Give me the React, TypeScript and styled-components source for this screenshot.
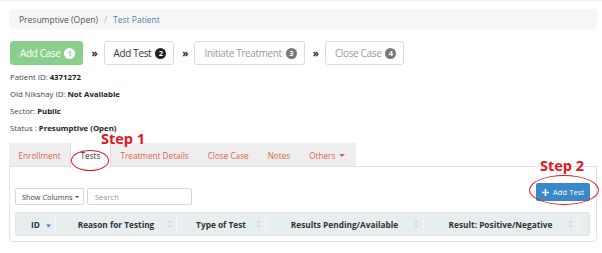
import React from 'react';
import styled, { createGlobalStyle } from 'styled-components';

const GlobalStyle = createGlobalStyle`
  html, body { margin: 0; padding: 0; background: #fff; }
  body {
    font-family: "Open Sans", "Liberation Sans", Arial, sans-serif;
    color: #333;
  }
  * { box-sizing: border-box; }
`;

const steps = [
  { label: 'Add Case', n: 1, kind: 'done' },
  { label: 'Add Test', n: 2, kind: 'current' },
  { label: 'Initiate Treatment', n: 3, kind: 'todo' },
  { label: 'Close Case', n: 4, kind: 'todo' },
] as const;

type StepKind = 'done' | 'current' | 'todo';

const tabs = ['Enrollment', 'Tests', 'Treatment Details', 'Close Case', 'Notes', 'Others'];

const columns = [
  { label: 'ID', width: 40, active: true },
  { label: 'Reason for Testing', width: 121 },
  { label: 'Type of Test', width: 89 },
  { label: 'Results Pending/Available', width: 158 },
  { label: 'Result: Positive/Negative', width: 154 },
  { label: '', width: 14, noIcon: true },
];

const info = [
  ['Patient ID:', '4371272'],
  ['Old Nikshay ID:', 'Not Available'],
  ['Sector:', 'Public'],
  ['Status :', 'Presumptive (Open)'],
];

const Page = styled.div`
  width: 602px;
  height: 253px;
  border-top: 1px solid #f0f0f0;
  padding: 8px 5px 0 9px;
  overflow: hidden;
`;

const Breadcrumb = styled.div`
  height: 20px;
  background: #f6f6f6;
  border-radius: 3px;
  display: flex;
  align-items: center;
  padding-left: 10px;
  font-size: 8.5px;
  color: #555;
`;

const Sep = styled.span`
  color: #bbb;
  margin: 0 6px;
`;

const Crumb = styled.span`
  color: #4a80b5;
`;

const StepRow = styled.div`
  display: flex;
  align-items: center;
  margin-top: 12px;
  margin-left: 1px;
`;

const StepButton = styled.div<{ $kind: StepKind }>`
  height: 24px;
  display: flex;
  align-items: center;
  padding: 0 7px 0 9px;
  border-radius: 3px;
  font-size: 9.9px;
  letter-spacing: -0.3px;
  white-space: nowrap;
  border: 1px solid ${p => (p.$kind === 'done' ? '#8ccf8c' : '#dcdcdc')};
  background: ${p => (p.$kind === 'done' ? '#8ccf8c' : '#fff')};
  color: ${p => (p.$kind === 'done' ? '#fff' : p.$kind === 'current' ? '#333' : '#999')};
`;

const Badge = styled.span<{ $kind: StepKind }>`
  display: inline-flex;
  align-items: center;
  justify-content: center;
  min-width: 11px;
  height: 11px;
  border-radius: 6px;
  margin-left: 4px;
  font-size: 7.5px;
  font-weight: 700;
  letter-spacing: 0;
  background: ${p => (p.$kind === 'done' ? '#fff' : p.$kind === 'current' ? '#222' : '#777')};
  color: ${p => (p.$kind === 'done' ? '#8ccf8c' : '#fff')};
`;

const Arrow = styled.span`
  font-size: 10px;
  font-weight: 700;
  color: #222;
  margin: 0 8px 0 8px;
  letter-spacing: -2px;
`;

const InfoList = styled.div`
  margin-top: 4px;
  margin-left: 1px;
`;

const InfoLine = styled.div`
  height: 17px;
  line-height: 17px;
  font-size: 7.8px;
  color: #444;
  b { color: #222; font-weight: 700; }
`;

const TabArea = styled.div`
  position: relative;
  margin-top: 6px;
`;

const TabBar = styled.div`
  display: flex;
  width: fit-content;
  height: 24px;
  background: #eeeeee;
  padding-right: 1px;
`;

const Tab = styled.div<{ $active?: boolean }>`
  height: ${p => (p.$active ? '25px' : '24px')};
  display: flex;
  align-items: center;
  padding: 0 9.5px;
  font-size: 8.2px;
  white-space: nowrap;
  color: ${p => (p.$active ? '#333' : '#e0644a')};
  background: ${p => (p.$active ? '#fff' : 'transparent')};
  border-left: ${p => (p.$active ? '1px solid #ddd' : 'none')};
  border-right: ${p => (p.$active ? '1px solid #ddd' : 'none')};
  position: relative;
  z-index: 1;
`;

const Caret = styled.span`
  display: inline-block;
  margin-left: 4px;
  border-left: 3px solid transparent;
  border-right: 3px solid transparent;
  border-top: 3px solid #e0644a;
`;

const Panel = styled.div`
  border: 1px solid #e2e2e2;
  border-radius: 0 0 4px 4px;
  height: 76px;
  padding: 0 6px 0 5px;
  margin-top: -1px;
`;

const TopRow = styled.div`
  display: flex;
  justify-content: space-between;
  align-items: flex-start;
`;

const Toolbar = styled.div`
  display: flex;
  gap: 3px;
  margin-top: 21px;
`;

const ShowCols = styled.div`
  height: 17px;
  width: 69px;
  border: 1px solid #d8d8d8;
  border-radius: 2px;
  display: flex;
  align-items: center;
  padding-left: 6px;
  font-size: 7.3px;
  white-space: nowrap;
  color: #444;
`;

const SmallCaret = styled.span`
  display: inline-block;
  margin-left: 3px;
  border-left: 2.5px solid transparent;
  border-right: 2.5px solid transparent;
  border-top: 2.5px solid #444;
`;

const SearchBox = styled.div`
  height: 17px;
  width: 105px;
  border: 1px solid #d8d8d8;
  border-radius: 2px;
  display: flex;
  align-items: center;
  padding-left: 7px;
  font-size: 7.5px;
  color: #999;
`;

const AddButton = styled.div`
  margin-top: 16px;
  height: 18px;
  width: 54px;
  border-radius: 2px;
  background: #3a87c9;
  color: #fff;
  font-size: 7.8px;
  white-space: nowrap;
  display: flex;
  align-items: center;
  justify-content: center;
  gap: 4px;
`;

const HeaderRow = styled.div`
  display: flex;
  margin-top: 7px;
  height: 24px;
  background: #e7eeef;
  border: 1px solid #e0e6e8;
  border-radius: 2px;
`;

const HeaderCell = styled.div<{ $w: number }>`
  width: ${p => p.$w}px;
  flex: none;
  position: relative;
  display: flex;
  align-items: center;
  justify-content: center;
  font-size: 8.3px;
  font-weight: 700;
  color: #333;
  white-space: nowrap;
  border-right: 1px solid #f4f7f7;
  &:last-child { border-right: none; }
`;

const SortIcon = styled.svg`
  position: absolute;
  right: 4px;
  top: 50%;
  transform: translateY(-50%);
`;

const Annotation = styled.div`
  position: absolute;
  color: #e8141b;
  font-weight: 700;
  font-size: 14.5px;
  font-family: "Open Sans", "Liberation Sans", Arial, sans-serif;
  line-height: 1;
  white-space: nowrap;
  z-index: 3;
`;

const Ellipse = styled.div`
  position: absolute;
  border: 1.5px solid #e8141b;
  border-radius: 50%;
  z-index: 3;
`;

const PanelWrap = styled.div`
  position: relative;
`;

const Sort = ({ active }: { active?: boolean }) => (
  <SortIcon width="5" height="9" viewBox="0 0 5 9">
    {active ? (
      <path d="M0 5 L5 5 L2.5 8 Z" fill="#6a6ad0" />
    ) : (
      <>
        <path d="M0 3.5 L5 3.5 L2.5 0.5 Z" fill="#d6dcdd" />
        <path d="M0 5.5 L5 5.5 L2.5 8.5 Z" fill="#d6dcdd" />
      </>
    )}
  </SortIcon>
);

const App = () => (
  <Page>
    <GlobalStyle />
    <Breadcrumb>
      Presumptive (Open)
      <Sep>/</Sep>
      <Crumb>Test Patient</Crumb>
    </Breadcrumb>

    <StepRow>
      {steps.map((s, i) => (
        <React.Fragment key={s.label}>
          {i > 0 && <Arrow>»</Arrow>}
          <StepButton $kind={s.kind}>
            {s.label}
            <Badge $kind={s.kind}>{s.n}</Badge>
          </StepButton>
        </React.Fragment>
      ))}
    </StepRow>

    <InfoList>
      {info.map(([k, v]) => (
        <InfoLine key={k}>
          {k} <b>{v}</b>
        </InfoLine>
      ))}
    </InfoList>

    <TabArea>
      <Annotation style={{ left: 92, top: -11 }}>Step 1</Annotation>
      <Ellipse style={{ left: 62, top: 7, width: 38, height: 21 }} />
      <TabBar>
        {tabs.map(t => (
          <Tab key={t} $active={t === 'Tests'}>
            {t}
            {t === 'Others' && <Caret />}
          </Tab>
        ))}
      </TabBar>
      <PanelWrap>
        <Annotation style={{ left: 531, top: -7 }}>Step 2</Annotation>
        <Ellipse style={{ left: 520, top: 9, width: 70, height: 30 }} />
        <Panel>
          <TopRow>
            <Toolbar>
              <ShowCols>
                Show Columns
                <SmallCaret />
              </ShowCols>
              <SearchBox>Search</SearchBox>
            </Toolbar>
            <AddButton>
              <svg width="7" height="7" viewBox="0 0 7 7">
                <path d="M2.7 0h1.6v2.7H7v1.6H4.3V7H2.7V4.3H0V2.7h2.7z" fill="#fff" />
              </svg>
              Add Test
            </AddButton>
          </TopRow>
          <HeaderRow>
            {columns.map((c, i) => (
              <HeaderCell key={i} $w={c.width}>
                {c.label}
                {!c.noIcon && <Sort active={c.active} />}
              </HeaderCell>
            ))}
          </HeaderRow>
        </Panel>
      </PanelWrap>
    </TabArea>
  </Page>
);

export default App;
